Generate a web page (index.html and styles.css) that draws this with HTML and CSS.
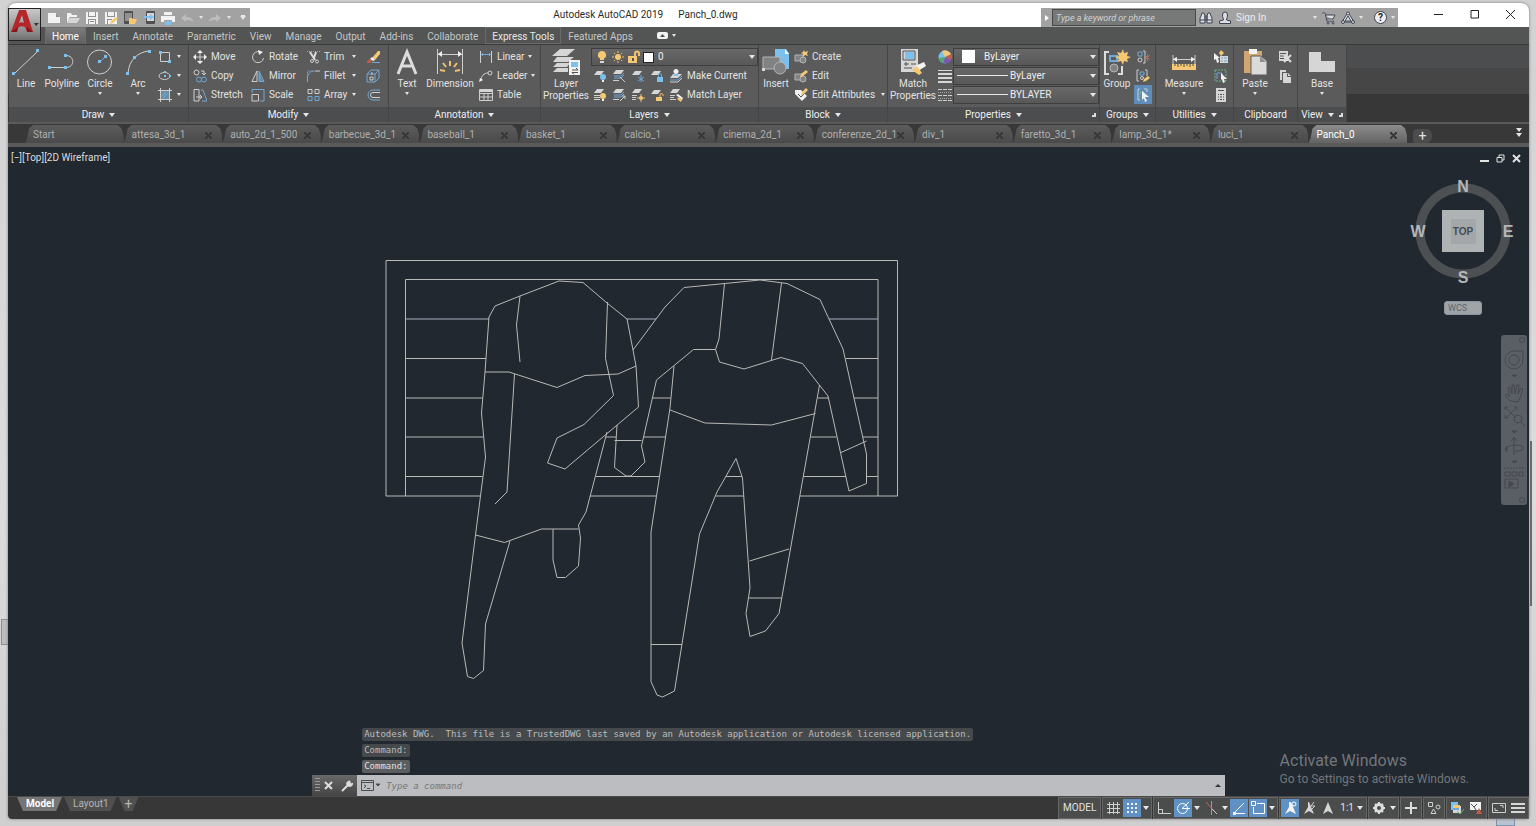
FILE: index.html
```html
<!DOCTYPE html>
<html lang="en">
<head>
  <meta charset="UTF-8" />
  <meta name="viewport" content="width=device-width, initial-scale=1.0"/>
  <title>Autodesk AutoCAD 2019 - Panch_0.dwg</title>
  <link rel="stylesheet" href="styles.css">
</head>
<body>

  <!-- Icon set -->
  <svg class="sprite" width="0" height="0" aria-hidden="true">
    <!-- small icons, 14x14 -->
    <symbol id="i-new" viewBox="0 0 14 14"><path class="fw" d="M1 2h8l4 4v6H1z"/><path class="fg" d="M9 2v4h4z"/></symbol>
    <symbol id="i-open" viewBox="0 0 14 14"><path class="fw" d="M1 2h4l1 2h5v2H4l-3 6z"/><path class="fl" d="M4 7h10l-3 5H1z"/></symbol>
    <symbol id="i-save" viewBox="0 0 14 14"><path class="fw" d="M1 1h12v12H1z"/><path class="fg" d="M3 1h1v4h6V1h1v5H3zM3 8h8v5h-1V9H4v4H3z"/><path class="fg" d="M5 10h4v1H5z"/></symbol>
    <symbol id="i-saveas" viewBox="0 0 14 14"><path class="fw" d="M1 1h12v12H1z"/><path class="fg" d="M3 1h1v4h6V1h1v5H3zM3 8h5v1H4v4H3z"/><path class="fy" d="M6 13l1-3 5-4 2 2-5 4z"/></symbol>
    <symbol id="i-webopen" viewBox="0 0 14 14"><rect class="fd" x="1" y="0" width="9" height="13" rx="1"/><path class="fg" d="M2 2h7v8H2z"/><path class="fy" d="M6 7h3l1 1h4l-2 5H6z"/></symbol>
    <symbol id="i-websave" viewBox="0 0 14 14"><rect class="fd" x="4" y="0" width="9" height="13" rx="1"/><path class="fl" d="M5 2h7v8H5z"/><path class="fb" d="M2 5h6V3l4 3-4 3V7H2z"/></symbol>
    <symbol id="i-print" viewBox="0 0 14 14"><path class="fw" d="M3 1h8v3H3zM0 5h14v6h-3V9H3v2H0z"/><path class="fb" d="M4 10h6v4H4z"/></symbol>
    <symbol id="i-undo" viewBox="0 0 14 14"><path class="fdis" d="M1 7l5-4v3c4 0 7 1 7 5-2-2-4-2-7-2v2z"/></symbol>
    <symbol id="i-redo" viewBox="0 0 14 14"><path class="fdis" d="M13 7L8 3v3c-4 0-7 1-7 5 2-2 4-2 7-2v2z"/></symbol>
    <symbol id="i-rect" viewBox="0 0 14 14"><path class="s" d="M2.500 3v8.500h9v-9H4"/><path class="fb" d="M1 1h3v3H1zM10 10h3v3h-3z"/></symbol>
    <symbol id="i-ellipse" viewBox="0 0 14 14"><ellipse class="s" cx="6.500" cy="7" rx="5.500" ry="3.500"/><path class="fb" d="M6 6h2v2H6zM6 2h2v2H6zM11 6h2v2h-2z"/></symbol>
    <symbol id="i-hatch" viewBox="0 0 14 14"><path class="fb dim" d="M3 3h8v8H3z"/><path class="s" d="M2.500 0v14M11.500 0v14M0 2.500h14M0 11.500h14"/><path class="b" d="M4 8l4-4M5 10l5-5"/></symbol>
    <symbol id="i-move" viewBox="0 0 14 14"><path class="s" d="M7 2v10M2 7h10"/><path class="fw" d="M7 0l3 3H4zM7 14l3-3H4zM0 7l3-3v6zM14 7l-3-3v6z"/></symbol>
    <symbol id="i-rotate" viewBox="0 0 14 14"><path class="s" d="M9 2A5.500 5.500 0 1 0 12.500 8"/><path class="fw" d="M7 0l5 2-4 3z"/></symbol>
    <symbol id="i-trim" viewBox="0 0 14 14"><path class="dots" d="M1 1.500h13"/><path class="s2" d="M4 2l5 8M10 2L8 8"/><circle class="s" cx="6" cy="11" r="1.500"/><circle class="s" cx="11" cy="11.500" r="1.500"/></symbol>
    <symbol id="i-erase" viewBox="0 0 14 14"><path class="fy" d="M6 8l6-7h2v3l-5 6z"/><path class="fw" d="M4 9l2-2 3 3-2 1z"/><path class="fr" d="M1 11l3-2 2 2-1 2H1z"/><path class="b" d="M6 12.500h8"/></symbol>
    <symbol id="i-copy" viewBox="0 0 14 14"><circle class="s" cx="3.500" cy="3.500" r="2.500"/><path class="s" d="M8 2h3v4M9 4l2 2 2-2"/><circle class="b" cx="6" cy="10.500" r="2.500"/><circle class="b" cx="11" cy="10.500" r="2.500"/></symbol>
    <symbol id="i-mirror" viewBox="0 0 14 14"><path class="s" d="M6 2v10.500H1z"/><path class="b" d="M8 2v10.500h5z"/><path class="fb dim" d="M8 3v9h4z"/></symbol>
    <symbol id="i-fillet" viewBox="0 0 14 14"><path class="b" d="M1.500 13V9c0-4 3-7 7-7"/><path class="s" d="M9 2h5"/><path class="dots" d="M1.500 8V2H7"/></symbol>
    <symbol id="i-box" viewBox="0 0 14 14"><path class="b" d="M1 5h8v8H1zM1 5l4-4h8v8l-4 4M9 5l4-4"/><path class="s" d="M4 8h3v3H4zM6 3v3"/></symbol>
    <symbol id="i-stretch" viewBox="0 0 14 14"><path class="s" d="M1 1.500h5V13H1zM3 9h6M7 7l2 2-2 2"/><path class="b" d="M8 2h2l4 11H9"/></symbol>
    <symbol id="i-scale" viewBox="0 0 14 14"><path class="b" d="M1 5V1.500h12V13H9"/><path class="s" d="M1 6.500h6.500V13H1z"/></symbol>
    <symbol id="i-array" viewBox="0 0 14 14"><path class="s" d="M2 1.500h4v4H2zM9 1.500h4v4H9z"/><path class="b" d="M2 8.500h4v4H2zM9 8.500h4v4H9z"/></symbol>
    <symbol id="i-offset" viewBox="0 0 14 14"><path class="b" d="M14 2H7a5 5 0 0 0 0 10h7"/><path class="s" d="M14 4.500H7a2.500 2.500 0 0 0 0 5h7"/></symbol>
    <symbol id="i-linear" viewBox="0 0 14 14"><path class="s" d="M1.500 1v12M12.500 1v12"/><path class="b" d="M2 4.500h10M4 3L2.500 4.500 4 6M10 3l1.500 1.500L10 6"/></symbol>
    <symbol id="i-leader" viewBox="0 0 14 14"><path class="s" d="M2 12C2 7 5 4 9 4"/><circle class="s" cx="11" cy="4" r="2"/><path class="fw" d="M0 13l1-4 3 2z"/></symbol>
    <symbol id="i-table" viewBox="0 0 14 14"><path class="s" d="M.5 1.500h13v11H.5zM1 5.500h12M1 9h12M5 5v7M9 5v7"/><path class="fl" d="M1 2h12v2H1z"/></symbol>
    <symbol id="i-bulb" viewBox="0 0 14 14"><path class="fy" d="M7 1a4 4 0 0 0-2 7.500V10h4V8.500A4 4 0 0 0 7 1z"/><path class="fl" d="M5 11h4v2H5z"/></symbol>
    <symbol id="i-sun" viewBox="0 0 14 14"><circle class="fy" cx="7" cy="7" r="3"/><path class="y" d="M7 1v2M7 11v2M1 7h2M11 7h2M3 3l1 1M10 10l1 1M11 3l-1 1M4 10l-1 1"/></symbol>
    <symbol id="i-unlock" viewBox="0 0 14 14"><path class="fy" d="M1 6h9v7H1z"/><path class="y2" d="M8 6V3.500a2 2 0 0 1 4 0V6"/><path class="fd" d="M5 8h2v3H5z"/></symbol>
    <symbol id="i-l-off" viewBox="0 0 14 14"><path class="fl" d="M4 2h7L8 6H1z"/><circle class="fb" cx="10" cy="8" r="3"/><path class="fw" d="M9 11h2v2H9z"/></symbol>
    <symbol id="i-l-iso" viewBox="0 0 14 14"><path class="fl" d="M4 1h8L9 5H1z"/><path class="b" d="M2 7h7l3-3M2 9h7l3-3"/><path class="s" d="M1 11.500h6M8 8l5 5"/></symbol>
    <symbol id="i-l-freeze" viewBox="0 0 14 14"><path class="fl" d="M4 2h7L8 6H1z"/><path class="b" d="M10 6v7M7 8l6 4M13 8l-6 4"/></symbol>
    <symbol id="i-l-lock" viewBox="0 0 14 14"><path class="fl" d="M4 2h7L8 6H1z"/><path class="fb" d="M7 8h6v5H7z"/><path class="b" d="M8.500 8V6a1.500 1.500 0 0 1 3 0v2"/></symbol>
    <symbol id="i-l-cur" viewBox="0 0 14 14"><path class="fl" d="M4 5h9l-4 4H1z"/><circle class="fw" cx="7" cy="2.500" r="2.500"/><path class="fb" d="M5 5h4v2H5z"/><path class="b" d="M1 11h8l4-4"/><path class="s" d="M1 13h8l4-4"/></symbol>
    <symbol id="i-l-on" viewBox="0 0 14 14"><path class="fl" d="M4 1h7L8 5H1z"/><path class="s" d="M1 7.500h6M1 9.500h6M1 11.500h6"/><circle class="fy" cx="10" cy="8" r="3"/><path class="fw" d="M9 11h2v2H9z"/></symbol>
    <symbol id="i-l-uniso" viewBox="0 0 14 14"><path class="fl" d="M4 1h8L9 5H1z"/><path class="b" d="M2 7h7l3-3M2 9h7l3-3"/><path class="s" d="M1 11.500h6M8 13l5-5M10 8h3v3"/></symbol>
    <symbol id="i-l-thaw" viewBox="0 0 14 14"><path class="fl" d="M4 1h7L8 5H1z"/><path class="s" d="M1 7.500h5M1 9.500h4M1 11.500h4"/><circle class="fy" cx="10" cy="10" r="2"/><path class="y" d="M10 6v8M6 10h8"/></symbol>
    <symbol id="i-l-unlock" viewBox="0 0 14 14"><path class="fl" d="M4 2h7L8 6H1z"/><path class="fy" d="M6 9h6v4H6z"/><path class="y" d="M10 9V7a1.500 1.500 0 0 1 3 0v1"/></symbol>
    <symbol id="i-l-match" viewBox="0 0 14 14"><path class="fl" d="M4 1h7L8 5H1z"/><path class="s" d="M1 7.500h5M1 9.500h4M1 11.500h6"/><path class="fw" d="M7 7l2-1 5 4-1 2z"/><path class="fy" d="M8 11l2-2 3 3-1 2z"/></symbol>
    <symbol id="i-b-create" viewBox="0 0 14 14"><path class="sf" d="M1 5h8v6H1z"/><circle class="sf" cx="9" cy="10" r="3"/><path class="fy" d="M10 0l1 2 3-1-1 3 1 2-3-1-2 2V4L7 3l2-1z"/></symbol>
    <symbol id="i-b-edit" viewBox="0 0 14 14"><path class="sf" d="M1 5h8v6H1z"/><circle class="sf" cx="9" cy="10" r="3"/><path class="fy" d="M6 8l1-3 5-4 2 2-5 4z"/></symbol>
    <symbol id="i-b-attr" viewBox="0 0 14 14"><path class="fw" d="M1 2h6l6 6-5 5-7-7z"/><path class="dk" d="M4 6l3 3 4-4"/><path class="fy" d="M7 8l1-4 4-4 2 2-4 4z"/></symbol>
    <symbol id="i-wheel" viewBox="0 0 14 14"><circle class="fb" cx="7" cy="7" r="6.500"/><path class="fr" d="M7 7l6-3a7 7 0 0 1 0 6z"/><path class="fy" d="M7 7L4 1a7 7 0 0 1 9 3z"/><path fill="#7b55b8" d="M7 7l6 3a7 7 0 0 1-8 3z"/><path fill="#58a56b" d="M7 7l-2 6a7 7 0 0 1-4-5z"/></symbol>
    <symbol id="i-lweight" viewBox="0 0 14 14"><path class="fl" d="M0 1h14v1H0zM0 4h14v2H0zM0 8h14v2H0zM0 12h14v2H0z"/></symbol>
    <symbol id="i-ltype" viewBox="0 0 14 14"><path class="dots" d="M0 4.500h14M0 10.500h14"/><path class="s" d="M0 1.500h14M0 7.500h14M0 12.500h14" stroke-dasharray="4 1"/></symbol>
    <symbol id="i-ungroup" viewBox="0 0 14 14"><path class="b" d="M2 2h4v4H2z"/><circle class="s" cx="4" cy="10" r="2"/><path class="s" d="M7 1h2v12H7"/><path class="r" d="M9 5l5 5M14 5L9 10M11.500 4v7"/></symbol>
    <symbol id="i-gedit" viewBox="0 0 14 14"><path class="s" d="M3 1H1v11h2M9 1h2v6"/><path class="b" d="M4 3h4v3H4z"/><circle class="s" cx="6" cy="9" r="1.500"/><path class="fy" d="M7 13l1-3 4-3 2 2-4 3z"/></symbol>
    <symbol id="i-gsel" viewBox="0 0 14 14"><path class="s" d="M4 1H2v11h2M8 1h3v3"/><path class="g" d="M4 10V4h4" stroke-dasharray="2 1"/><path class="fw" d="M6 3l7 6H9l2 4-2 1-1-4-2 2z"/></symbol>
    <symbol id="i-qsel" viewBox="0 0 14 14"><path class="fl" d="M6 6h8v7H6z"/><path class="b" d="M7 8h2M7 11h2M10 8h3M10 11h3"/><path class="fw" d="M0 3l6 5H4l1 4-2 1-1-4-2 1z"/><path class="fy" d="M7 0l3 3-3 3-2-3z"/></symbol>
    <symbol id="i-selall" viewBox="0 0 14 14"><path class="g" d="M1 1h11v11H1z" stroke-dasharray="2 1"/><path class="b" d="M3 10V4h5v5"/><path class="fw" d="M7 4l6 6h-3l1 3-2 1-1-4-1 1z"/></symbol>
    <symbol id="i-calc" viewBox="0 0 14 14"><path class="fl" d="M2 0h10v14H2z"/><path class="dk" d="M4 2.500h6M4 6.500h6M4 9h6M4 11.500h6"/><path class="ld" d="M5.500 5v8M8.500 5v8"/></symbol>
    <symbol id="i-cut" viewBox="0 0 14 14"><path class="fl" d="M1 1h9v10H1z"/><path class="dk" d="M2 3.500h6M2 6h5M2 8.500h4"/><path class="s2" d="M6 5l7 7M13 5l-7 7"/></symbol>
    <symbol id="i-cpy" viewBox="0 0 14 14"><path class="fl" d="M2 1h6v2H4v8H2z"/><path class="fl" d="M5 4h5l3 3v7H5z"/><path class="dk" d="M9.500 4.500v3H13"/></symbol>
    <symbol id="i-bino" viewBox="0 0 14 14"><path class="ink" d="M2 5l1-3h2l1 3v7H1V7zM12 5l-1-3H9L8 5v7h5V7zM6 5h2v4H6zM1 9h5M8 9h5"/></symbol>
    <symbol id="i-user" viewBox="0 0 14 14"><path class="ink" d="M4.500 4a2.500 3 0 0 1 5 0c0 3-1 3-1 5l4 1v2.500h-11V10l4-1c0-2-1-2-1-5z"/></symbol>
    <symbol id="i-cart" viewBox="0 0 14 14"><path class="ink" d="M0 2h3l2 8h7M3.500 4H13l-2 4H5"/><circle class="ink" cx="6" cy="12" r="1"/><circle class="ink" cx="11" cy="12" r="1"/></symbol>
    <symbol id="i-a360" viewBox="0 0 14 14"><path class="ink" d="M7 1L1 11h12zM7 5l-3 5h6z"/><circle class="ink" cx="2" cy="11" r="1.500"/><circle class="ink" cx="12" cy="11" r="1.500"/><circle class="ink" cx="7" cy="2.500" r="1.500"/></symbol>

    <!-- status bar -->
    <symbol id="s-grid" viewBox="0 0 14 14"><path class="s" d="M3.500 1v12M7.500 1v12M11.500 1v12M1 3.500h13M1 7.500h13M1 11.500h13"/></symbol>
    <symbol id="s-snap" viewBox="0 0 14 14"><path class="fw" d="M2 2h2v2H2zM6 2h2v2H6zM10 2h2v2h-2zM2 6h2v2H2zM6 6h2v2H6zM10 6h2v2h-2zM2 10h2v2H2zM6 10h2v2H6zM10 10h2v2h-2z"/></symbol>
    <symbol id="s-ortho" viewBox="0 0 14 14"><path class="s" d="M1.500 1v11.500H14M1.500 8.500H5.500v4"/></symbol>
    <symbol id="s-polar" viewBox="0 0 14 14"><circle class="sw" cx="6.500" cy="7.500" r="5"/><path class="sw" d="M6 7.500h8M6 7.500L13 1"/></symbol>
    <symbol id="s-iso" viewBox="0 0 14 14"><path class="g" d="M7.500 0v14"/><path class="r" d="M2 1l10 11"/><path class="s" d="M8 8l5 5"/></symbol>
    <symbol id="s-track" viewBox="0 0 14 14"><path class="sw" d="M12 2L2 12M3 12.500h10" /><path class="fw" d="M1 11h3v3H1z"/></symbol>
    <symbol id="s-osnap" viewBox="0 0 14 14"><path class="sw" d="M6 2.500h7.500v10h-11V6M.5.5h4v4h-4z"/></symbol>
    <symbol id="s-ann" viewBox="0 0 14 14"><path class="fw" d="M6 1h2l5 12-6-3-5 3 4-7z"/><circle class="sw" cx="11" cy="3" r="2"/></symbol>
    <symbol id="s-auto" viewBox="0 0 14 14"><path class="fl" d="M6 1h1l5 12-5-3-5 3 4-7z"/><path class="s" d="M12 1L9 5h4L10 8"/></symbol>
    <symbol id="s-scale" viewBox="0 0 14 14"><path class="fl" d="M7 1l5 12-5-3-5 3z"/></symbol>
    <symbol id="s-gear" viewBox="0 0 14 14"><circle class="gear" cx="7" cy="7" r="3.500"/><path class="s2" d="M7 1v2M7 11v2M1 7h2M11 7h2M3 3l1 1M10 10l1 1M11 3l-1 1M4 10l-1 1"/></symbol>
    <symbol id="s-plus" viewBox="0 0 14 14"><path class="s2" d="M7 1v12M1 7h12"/></symbol>
    <symbol id="s-iso2" viewBox="0 0 14 14"><path class="s" d="M1.500 1.500h4v4h-4zM4 12.500h5L6.500 8z"/><circle class="s" cx="11" cy="6" r="2"/></symbol>
    <symbol id="s-hw" viewBox="0 0 14 14"><path class="fb" d="M1 1h7v8H1z"/><path class="fl" d="M3 5h8v7H3z"/><path class="fy" d="M3 4h7v3H3z"/><path class="b2" d="M3 8h6"/><path class="g" d="M7 10l3 3 4-5"/></symbol>
    <symbol id="s-clean" viewBox="0 0 14 14"><path class="fw" d="M1 1h11v8H1z"/><path class="dk" d="M2 3l3 3 3-3M5 6l4 6"/><path class="fr" d="M10 7l3 6H7z"/></symbol>
    <symbol id="s-full" viewBox="0 0 14 14"><path class="s" d="M.5 2.500h13v9H.5zM3 7v2.500h3M8 4.500h3V7"/></symbol>
    <symbol id="s-menu" viewBox="0 0 14 14"><path class="fl" d="M0 2h14v2H0zM0 6h14v2H0zM0 10h14v2H0z"/></symbol>

    <!-- large icons, 30x28 -->
    <symbol id="b-line" viewBox="0 0 30 28"><path class="s" d="M3 26L27 3"/><path class="fb" d="M1 24h3v3H1zM25 1h3v3h-3z"/></symbol>
    <symbol id="b-poly" viewBox="0 0 30 28"><path class="s" d="M3 19.500h16c9 0 9-12 0-12"/><path class="fb" d="M1 18h3v3H1zM17 18h3v3h-3zM17 6h3v3h-3z"/></symbol>
    <symbol id="b-circle" viewBox="0 0 30 28"><circle class="s" cx="14.500" cy="14" r="12"/><path class="b" d="M15 14l5-5"/><path class="fb" d="M13 12h3v3h-3zM19 7h3v3h-3z"/></symbol>
    <symbol id="b-arc" viewBox="0 0 30 28"><path class="s" d="M5 25C6 12 15 4 26 3"/><path class="fb" d="M3 24h3v3H3zM10 8h3v3h-3zM25 2h3v3h-3z"/></symbol>
    <symbol id="b-text" viewBox="0 0 30 28"><path class="a" d="M6 26L15 4l9 22M9 18h12"/></symbol>
    <symbol id="b-dim" viewBox="0 0 30 28"><path class="s" d="M2.500 1v25M27.500 1v25M3 6.500h24"/><path class="fw" d="M3 6l4-3v6zM27 6l-4-3v6z"/><path class="y2" d="M15 13v5M8 15l3 4M22 15l-3 4M5 22l5 1M25 22l-5 1"/></symbol>
    <symbol id="b-layer" viewBox="0 0 30 28"><path class="fl" d="M9 1h15l-8 7H1zM6 9h17l-6 5H2zM6 15h13l-3 4H2zM6 20h11v4H2z"/><path class="fw" d="M18 12h11v15H18z"/><path class="fb" d="M20 14h7v5h-7z"/><path class="dk" d="M21 22h6l-2-2M27 24.500h-6l2 2"/></symbol>
    <symbol id="b-insert" viewBox="0 0 30 28"><path class="fb" d="M14 1h11l3 4v16H14z"/><path class="fw" d="M24 1v5h4z"/><path class="sf" d="M2 9h17v12H2z"/><circle class="sf" cx="19" cy="20" r="6"/><path class="fl" d="M1 20h3v3H1z"/></symbol>
    <symbol id="b-match" viewBox="0 0 30 28"><path class="fl" d="M3 1h17v23H3z"/><path class="dk" d="M5 3h12v9H5zM6 16h5M13 16h5M8 14v4M6 20h8"/><path class="fb" d="M7 4h9v7H7z"/><path class="fw" d="M17 18l9-4 2 4-8 5z"/><path class="fy" d="M14 22l5-4 5 7-3 2z"/></symbol>
    <symbol id="b-group" viewBox="0 0 30 28"><path class="s2" d="M7 4H3v22h4M16 26h4v-8"/><path class="b2" d="M8 14V8h7v5H9"/><circle class="sf" cx="12" cy="20" r="4"/><path class="fy" d="M21 1l1 4 4-1-1 4 4 1-4 2 1 3-4-1-1 4-2-4-4 1 2-3-4-2 4-1-2-4 4 1z"/></symbol>
    <symbol id="b-measure" viewBox="0 0 30 28"><path class="s" d="M4 7v9M26 7v9M4 11.500h22"/><path class="fw" d="M4 11l4-2v5zM26 11l-4-2v5z"/><path class="fy" d="M3 16h24v6H3z"/><path class="dk" d="M6 16v2M9 16v3M12 16v2M15 16v3M18 16v2M21 16v3M24 16v2"/></symbol>
    <symbol id="b-paste" viewBox="0 0 30 28"><path fill="#d2a672" d="M4 3h18v22H4z"/><path class="fw" d="M9 1h8v5H9z"/><path class="sp" d="M11 8h10l6 5v14H11z"/><path class="fg" d="M20 8v6h6z"/></symbol>
    <symbol id="b-base" viewBox="0 0 30 28"><path class="fl" d="M2 4h12v9h14v11H2z"/></symbol>
  </svg>

  <!-- Things behind the main window -->
  <div class="behind behind-left"></div>
  <div class="behind behind-right"></div>
  <div class="behind behind-bottom"></div>

  <div class="window">

    <!-- Title bar -->
    <header class="titlebar">
      <button class="app-button" aria-label="Application menu">
        <svg width="31" height="31" viewBox="0 0 31 31"><path fill="#b3262a" d="M2 23L10 1h7l7 22h-6l-2-5c-3-1-5-1-7 1l-1 4zM10 14c2-1 3-1 5 0L13 6z"/><path fill="#83181c" d="M2 23l7-5-1 5zM18 23l0-5 6 5z"/><path fill="#333" d="M25 14h5l-3 3z"/></svg>
      </button>
      <div class="quick">
        <button aria-label="New"><svg class="ico"><use href="#i-new"/></svg></button>
        <button aria-label="Open"><svg class="ico"><use href="#i-open"/></svg></button>
        <button aria-label="Save"><svg class="ico"><use href="#i-save"/></svg></button>
        <button aria-label="Save As"><svg class="ico"><use href="#i-saveas"/></svg></button>
        <button aria-label="Open from Web"><svg class="ico"><use href="#i-webopen"/></svg></button>
        <button aria-label="Save to Web"><svg class="ico"><use href="#i-websave"/></svg></button>
        <button aria-label="Plot"><svg class="ico"><use href="#i-print"/></svg></button>
        <button aria-label="Undo"><svg class="ico"><use href="#i-undo"/></svg></button>
        <i class="arrow"></i>
        <button aria-label="Redo"><svg class="ico"><use href="#i-redo"/></svg></button>
        <i class="arrow"></i>
        <i class="arrow wide bar"></i>
      </div>
      <div class="title"><span>Autodesk AutoCAD 2019</span><span>Panch_0.dwg</span></div>
      <div class="info">
        <button class="info-toggle" aria-label="Collapse search"><i class="arrow right"></i></button>
        <input class="search" type="text" placeholder="Type a keyword or phrase" aria-label="Search help">
        <button aria-label="Find"><svg class="ico"><use href="#i-bino"/></svg></button>
        <button class="signin"><svg class="ico"><use href="#i-user"/></svg>Sign In<i class="arrow"></i></button>
        <button aria-label="App Store"><svg class="ico"><use href="#i-cart"/></svg></button>
        <button aria-label="Autodesk account"><svg class="ico"><use href="#i-a360"/></svg><i class="arrow"></i></button>
        <button class="help" aria-label="Help"><span>?</span><i class="arrow"></i></button>
      </div>
      <div class="window-buttons">
        <button aria-label="Minimize"><svg width="11" height="11"><path d="M1 5.500h9"/></svg></button>
        <button aria-label="Maximize"><svg width="11" height="11"><path d="M2 1.500h7.500v7.500H2z"/></svg></button>
        <button aria-label="Close"><svg width="11" height="11"><path d="M1 1l9 9M10 1l-9 9"/></svg></button>
      </div>
    </header>

    <!-- Ribbon tabs -->
    <nav class="menu">
      <a class="active" href="#">Home</a>
      <a href="#">Insert</a>
      <a href="#">Annotate</a>
      <a href="#">Parametric</a>
      <a href="#">View</a>
      <a href="#">Manage</a>
      <a href="#">Output</a>
      <a href="#">Add-ins</a>
      <a href="#">Collaborate</a>
      <a class="boxed" href="#">Express Tools</a>
      <a href="#">Featured Apps</a>
      <button class="ribbon-toggle" aria-label="Minimize ribbon"><svg width="11" height="7"><rect class="fw" width="11" height="7" rx="2"/><path class="fd" d="M3 5l2.500-3L8 5z"/></svg><i class="arrow"></i></button>
    </nav>

    <!-- Ribbon -->
    <section class="ribbon">
      <div class="panel p-draw">
        <div class="panel-body">
          <button class="big"><svg class="pic"><use href="#b-line"/></svg>Line</button>
          <button class="big"><svg class="pic"><use href="#b-poly"/></svg>Polyline</button>
          <button class="big"><svg class="pic"><use href="#b-circle"/></svg>Circle<i class="arrow"></i></button>
          <button class="big"><svg class="pic"><use href="#b-arc"/></svg>Arc<i class="arrow"></i></button>
          <div class="stack">
            <button class="tool" aria-label="Rectangle"><svg class="ico"><use href="#i-rect"/></svg><i class="arrow"></i></button>
            <button class="tool" aria-label="Ellipse"><svg class="ico"><use href="#i-ellipse"/></svg><i class="arrow"></i></button>
            <button class="tool" aria-label="Hatch"><svg class="ico"><use href="#i-hatch"/></svg><i class="arrow"></i></button>
          </div>
        </div>
        <div class="panel-title">Draw<i class="arrow wide"></i></div>
      </div>

      <div class="panel p-modify">
        <div class="panel-body">
          <button class="tool"><svg class="ico"><use href="#i-move"/></svg>Move</button>
          <button class="tool"><svg class="ico"><use href="#i-rotate"/></svg>Rotate</button>
          <button class="tool"><svg class="ico"><use href="#i-trim"/></svg>Trim<i class="arrow"></i></button>
          <button class="tool" aria-label="Erase"><svg class="ico"><use href="#i-erase"/></svg></button>
          <button class="tool"><svg class="ico"><use href="#i-copy"/></svg>Copy</button>
          <button class="tool"><svg class="ico"><use href="#i-mirror"/></svg>Mirror</button>
          <button class="tool"><svg class="ico"><use href="#i-fillet"/></svg>Fillet<i class="arrow"></i></button>
          <button class="tool" aria-label="Explode"><svg class="ico"><use href="#i-box"/></svg></button>
          <button class="tool"><svg class="ico"><use href="#i-stretch"/></svg>Stretch</button>
          <button class="tool"><svg class="ico"><use href="#i-scale"/></svg>Scale</button>
          <button class="tool"><svg class="ico"><use href="#i-array"/></svg>Array<i class="arrow"></i></button>
          <button class="tool" aria-label="Offset"><svg class="ico"><use href="#i-offset"/></svg></button>
        </div>
        <div class="panel-title">Modify<i class="arrow wide"></i></div>
      </div>

      <div class="panel p-annotation">
        <div class="panel-body">
          <button class="big"><svg class="pic"><use href="#b-text"/></svg>Text<i class="arrow"></i></button>
          <button class="big"><svg class="pic"><use href="#b-dim"/></svg>Dimension</button>
          <div class="stack">
            <button class="tool"><svg class="ico"><use href="#i-linear"/></svg>Linear<i class="arrow"></i></button>
            <button class="tool"><svg class="ico"><use href="#i-leader"/></svg>Leader<i class="arrow"></i></button>
            <button class="tool"><svg class="ico"><use href="#i-table"/></svg>Table</button>
          </div>
        </div>
        <div class="panel-title">Annotation<i class="arrow wide"></i></div>
      </div>

      <div class="panel p-layers">
        <div class="panel-body">
          <button class="big"><svg class="pic"><use href="#b-layer"/></svg>Layer<br>Properties</button>
          <div class="stack">
            <div class="combo">
              <svg class="ico"><use href="#i-bulb"/></svg><svg class="ico"><use href="#i-sun"/></svg><svg class="ico"><use href="#i-unlock"/></svg><i class="swatch"></i>
              <select aria-label="Layer"><option>0</option></select><i class="arrow wide"></i>
            </div>
            <div class="tool-row">
              <button class="tool" aria-label="Off"><svg class="ico"><use href="#i-l-off"/></svg></button>
              <button class="tool" aria-label="Isolate"><svg class="ico"><use href="#i-l-iso"/></svg></button>
              <button class="tool" aria-label="Freeze"><svg class="ico"><use href="#i-l-freeze"/></svg></button>
              <button class="tool" aria-label="Lock"><svg class="ico"><use href="#i-l-lock"/></svg></button>
              <button class="tool"><svg class="ico"><use href="#i-l-cur"/></svg>Make Current</button>
            </div>
            <div class="tool-row">
              <button class="tool" aria-label="Turn all on"><svg class="ico"><use href="#i-l-on"/></svg></button>
              <button class="tool" aria-label="Unisolate"><svg class="ico"><use href="#i-l-uniso"/></svg></button>
              <button class="tool" aria-label="Thaw all"><svg class="ico"><use href="#i-l-thaw"/></svg></button>
              <button class="tool" aria-label="Unlock"><svg class="ico"><use href="#i-l-unlock"/></svg></button>
              <button class="tool"><svg class="ico"><use href="#i-l-match"/></svg>Match Layer</button>
            </div>
          </div>
        </div>
        <div class="panel-title">Layers<i class="arrow wide"></i></div>
      </div>

      <div class="panel p-block">
        <div class="panel-body">
          <button class="big"><svg class="pic"><use href="#b-insert"/></svg>Insert</button>
          <div class="stack">
            <button class="tool"><svg class="ico"><use href="#i-b-create"/></svg>Create</button>
            <button class="tool"><svg class="ico"><use href="#i-b-edit"/></svg>Edit</button>
            <button class="tool"><svg class="ico"><use href="#i-b-attr"/></svg>Edit Attributes<i class="arrow"></i></button>
          </div>
        </div>
        <div class="panel-title">Block<i class="arrow wide"></i></div>
      </div>

      <div class="panel p-properties">
        <div class="panel-body">
          <button class="big"><svg class="pic"><use href="#b-match"/></svg>Match<br>Properties</button>
          <div class="stack">
            <div class="prop-row">
              <svg class="ico"><use href="#i-wheel"/></svg>
              <div class="combo"><i class="swatch big-swatch"></i><select aria-label="Object color"><option>ByLayer</option></select><i class="arrow wide"></i></div>
            </div>
            <div class="prop-row">
              <svg class="ico"><use href="#i-lweight"/></svg>
              <div class="combo"><i class="line-sample"></i><select aria-label="Lineweight"><option>ByLayer</option></select><i class="arrow wide"></i></div>
            </div>
            <div class="prop-row">
              <svg class="ico"><use href="#i-ltype"/></svg>
              <div class="combo"><i class="line-sample"></i><select aria-label="Linetype"><option>BYLAYER</option></select><i class="arrow wide"></i></div>
            </div>
          </div>
        </div>
        <div class="panel-title">Properties<i class="arrow wide"></i><i class="launcher"></i></div>
      </div>

      <div class="panel p-groups">
        <div class="panel-body">
          <button class="big"><svg class="pic"><use href="#b-group"/></svg>Group</button>
          <div class="stack">
            <button class="tool" aria-label="Ungroup"><svg class="ico"><use href="#i-ungroup"/></svg></button>
            <button class="tool" aria-label="Group edit"><svg class="ico"><use href="#i-gedit"/></svg></button>
            <button class="tool on" aria-label="Group selection"><svg class="ico"><use href="#i-gsel"/></svg></button>
          </div>
        </div>
        <div class="panel-title">Groups<i class="arrow wide"></i></div>
      </div>

      <div class="panel p-utilities">
        <div class="panel-body">
          <button class="big"><svg class="pic"><use href="#b-measure"/></svg>Measure<i class="arrow"></i></button>
          <div class="stack">
            <button class="tool" aria-label="Quick select"><svg class="ico"><use href="#i-qsel"/></svg></button>
            <button class="tool" aria-label="Select all"><svg class="ico"><use href="#i-selall"/></svg></button>
            <button class="tool" aria-label="Calculator"><svg class="ico"><use href="#i-calc"/></svg></button>
          </div>
        </div>
        <div class="panel-title">Utilities<i class="arrow wide"></i></div>
      </div>

      <div class="panel p-clipboard">
        <div class="panel-body">
          <button class="big"><svg class="pic"><use href="#b-paste"/></svg>Paste<i class="arrow"></i></button>
          <div class="stack">
            <button class="tool" aria-label="Cut"><svg class="ico"><use href="#i-cut"/></svg></button>
            <button class="tool" aria-label="Copy clip"><svg class="ico"><use href="#i-cpy"/></svg></button>
          </div>
        </div>
        <div class="panel-title">Clipboard</div>
      </div>

      <div class="panel p-view">
        <div class="panel-body">
          <button class="big"><svg class="pic"><use href="#b-base"/></svg>Base<i class="arrow"></i></button>
        </div>
        <div class="panel-title">View<i class="arrow wide"></i><i class="launcher"></i></div>
      </div>
    </section>

    <!-- Open drawings -->
    <div class="files">
      <div class="file-tabs">
        <a class="file" href="#">Start</a>
        <a class="file" href="#">attesa_3d_1<i class="x"></i></a>
        <a class="file" href="#">auto_2d_1_500<i class="x"></i></a>
        <a class="file" href="#">barbecue_3d_1<i class="x"></i></a>
        <a class="file" href="#">baseball_1<i class="x"></i></a>
        <a class="file" href="#">basket_1<i class="x"></i></a>
        <a class="file" href="#">calcio_1<i class="x"></i></a>
        <a class="file" href="#">cinema_2d_1<i class="x"></i></a>
        <a class="file" href="#">conferenze_2d_1<i class="x"></i></a>
        <a class="file" href="#">div_1<i class="x"></i></a>
        <a class="file" href="#">faretto_3d_1<i class="x"></i></a>
        <a class="file" href="#">lamp_3d_1*<i class="x"></i></a>
        <a class="file" href="#">luci_1<i class="x"></i></a>
        <a class="file current" href="#">Panch_0<i class="x"></i></a>
      </div>
      <button class="add-file" aria-label="New drawing">+</button>
      <button class="more-files" aria-label="More drawings"><i class="arrow wide"></i><i class="arrow wide"></i></button>
    </div>

    <!-- Drawing area -->
    <main class="canvas">
      <svg class="drawing" viewBox="8 147 1521 649" role="img" aria-label="Two people on a bench, top view">
        <!-- bench -->
        <path d="M480 496H386V260.500H897.500V496H800M590 496H656.500M716 496H743.500"/>
        <path d="M405.500 496V279.500H878V496"/>
        <path class="slat" d="M405.500 319H489M627 319H656M829 319H878"/>
        <path d="M405.500 358.500H486M846 358.500H878"/>
        <path d="M405.500 398H482.500M653 398H670.500M818 398H828M854 398H878"/>
        <path d="M405.500 437H483.500M606 437H616M644 437H665M811 437H836.500M863 437H878"/>
        <path d="M405.500 476.500H482.500M596 476.500H659M726 476.500H742M803.500 476.500H846M866.500 476.500H878"/>
        <!-- left person -->
        <path d="M489 317L495 306L520 296L559 281L583 282.500L607 303L627 319L633 350L636 366L638.500 407L565 469L547.500 463L557 438L584 424.500L613.500 395.500L605.500 358.500L607.500 302"/>
        <path d="M520 296L516.500 325L520 362"/>
        <path d="M489 317L485 372L481.500 413L485.500 457L475.500 535L462 643L467.500 676.500L473.500 678.500L483.500 670.500L485.500 624L510 541"/>
        <path d="M485 372H509L557 387.500L585 375.500L618 374L636 366"/>
        <path d="M514.500 374L507 492L495 504"/>
        <path d="M475.500 535L504.500 542.500L541.500 529H578.500"/>
        <path d="M607 432L586 512L578.500 525L580.500 538L578.500 566L565.500 577.500H557L553 560V529"/>
        <!-- right person -->
        <path d="M617 425L614.500 467.500L626 476H631L645 462L641.500 446L656.500 380L693.500 349.500H715.500M614.500 440.500H641.500"/>
        <path d="M633 350L665 307L684 287.500L725 283.500L760 280L787 283.500L820 299.500L829 319L843 349L866.500 454V483.500L849 491L828 396L802.500 363.500L781 357.500L744 369L719.500 362L715.500 349.500L719 339L724.500 283.500"/>
        <path d="M781.500 283L771.500 360M841 452.500L866.500 441"/>
        <path d="M670 410L705 423L771.500 425L815.500 413.500"/>
        <path d="M674 366L670 408L651 532V681.500L657 695L662.500 697L674.500 691L699.500 534L717 492L736 458.500L742.500 478L750 588L746 613.500L750 636.500L765.500 631L779 613.500L819.500 385"/>
        <path d="M651 644.500H682M749.500 561L789 549M749 598H781.500"/>
      </svg>

      <div class="viewport-label">[−][Top][2D Wireframe]</div>
      <div class="doc-buttons">
        <button aria-label="Minimize drawing"><svg width="9" height="9"><path d="M0 7h9"/></svg></button>
        <button aria-label="Restore drawing"><svg width="9" height="9"><path class="thin" d="M1 3.500h5v4.500H1zM3 3V1h5v5H6"/></svg></button>
        <button aria-label="Close drawing"><svg width="9" height="9"><path d="M1 1l7 7M8 1l-7 7"/></svg></button>
      </div>

      <div class="viewcube">
        <svg width="108" height="110" viewBox="0 0 108 110">
          <circle cx="54" cy="54" r="43" fill="none" stroke="#4d5052" stroke-width="9"/>
          <rect x="33" y="33" width="42" height="42" fill="#b0b3b3"/>
          <rect x="42" y="42" width="25" height="25" fill="#a4a7a9"/>
          <text class="face" x="54" y="58">TOP</text>
          <text class="compass" x="54" y="15">N</text>
          <text class="compass" x="54" y="106">S</text>
          <text class="compass" x="9" y="60">W</text>
          <text class="compass" x="99" y="60">E</text>
        </svg>
        <button class="wcs">WCS</button>
      </div>

      <div class="navbar">
        <svg width="26" height="170" viewBox="0 0 26 170">
          <circle cx="21" cy="5" r="2.500"/>
          <path d="M13 16h9v9a9 9 0 1 1-9-9z"/><circle cx="13" cy="25" r="5"/>
          <path class="f" d="M11 40h5l-3 2zM11 96h5l-3 2zM11 126h5l-3 2z"/>
          <path d="M9 66l-5-6 2-1 3 3-2-9 2-1 2 7V50h2l1 9 2-9h2l-1 9 3-6 2 1-3 9-2 4z"/>
          <path d="M4 72l11 11M16 72L5 83M4 75v-3h3M13 72h3v3M4 80v3h3"/><circle cx="17" cy="84" r="4"/><path d="M20 87l4 4"/>
          <path d="M13 103v17M10 106l3-4 3 4M7 114H5c-3-4 20-6 17 0-1 2-5 2-8 2M6 111v6l-2-3z"/>
          <path d="M3 133h20" stroke-dasharray="2 1"/><path d="M4 137h5v4H4zM11 137h5v4h-5zM18 137h4v4h-4zM4 144h13v9H4z"/><path class="f" d="M8 146l5 3-5 3z"/>
          <circle cx="21" cy="165" r="2.500"/>
        </svg>
      </div>

      <div class="activate">
        <h2>Activate Windows</h2>
        <p>Go to Settings to activate Windows.</p>
      </div>

      <!-- Command line -->
      <div class="command">
        <p class="log">Autodesk DWG.&nbsp; This file is a TrustedDWG last saved by an Autodesk application or Autodesk licensed application.</p>
        <p class="log">Command:</p>
        <p class="log last">Command:</p>
        <div class="command-line">
          <div class="command-tools">
            <i class="grip"></i>
            <button aria-label="Close command line"><svg width="9" height="9"><path d="M1 1l7 7M8 1l-7 7"/></svg></button>
            <button aria-label="Customize"><svg width="12" height="12"><path d="M1 11l6-6"/><path class="thin" d="M6 5c-1-3 1-4 3-4v2l2 1 1-1c0 3-3 4-5 3"/></svg></button>
          </div>
          <svg class="prompt" width="20" height="11"><path d="M.5.5h12v10H.5zM1 2.500h11M3 5l2 1-2 2M6 8.500h3"/><path class="f" d="M15 4h4l-2 2z"/></svg>
          <input type="text" placeholder="Type a command" aria-label="Command">
          <i class="arrow up"></i>
        </div>
      </div>
    </main>

    <!-- Layout tabs and status bar -->
    <footer class="bottom">
      <a class="layout current" href="#">Model</a>
      <a class="layout" href="#">Layout1</a>
      <button class="layout add" aria-label="New layout">+</button>
      <div class="status">
        <div class="group"><button class="wide-label">MODEL</button></div>
        <div class="group">
          <button aria-label="Grid"><svg class="ico"><use href="#s-grid"/></svg></button>
          <button class="on" aria-label="Snap"><svg class="ico"><use href="#s-snap"/></svg></button>
          <i class="arrow wide"></i>
        </div>
        <div class="group">
          <button aria-label="Ortho"><svg class="ico"><use href="#s-ortho"/></svg></button>
          <button class="on" aria-label="Polar tracking"><svg class="ico"><use href="#s-polar"/></svg></button>
          <i class="arrow wide"></i>
          <button aria-label="Isometric drafting"><svg class="ico"><use href="#s-iso"/></svg></button>
          <i class="arrow wide"></i>
          <button class="on" aria-label="Object snap tracking"><svg class="ico"><use href="#s-track"/></svg></button>
          <button class="on" aria-label="Object snap"><svg class="ico"><use href="#s-osnap"/></svg></button>
          <i class="arrow wide"></i>
        </div>
        <div class="group">
          <button class="on" aria-label="Annotation visibility"><svg class="ico"><use href="#s-ann"/></svg></button>
          <button aria-label="Auto scale"><svg class="ico"><use href="#s-auto"/></svg></button>
          <button aria-label="Annotation scale"><svg class="ico"><use href="#s-scale"/></svg></button>
          <button class="ratio">1:1<i class="arrow wide"></i></button>
        </div>
        <div class="group">
          <button aria-label="Workspace"><svg class="ico"><use href="#s-gear"/></svg></button>
          <i class="arrow wide"></i>
        </div>
        <div class="group"><button aria-label="Annotation monitor"><svg class="ico"><use href="#s-plus"/></svg></button></div>
        <div class="group"><button aria-label="Isolate objects"><svg class="ico"><use href="#s-iso2"/></svg></button></div>
        <div class="group">
          <button aria-label="Hardware acceleration"><svg class="ico"><use href="#s-hw"/></svg></button>
          <button aria-label="Notifications"><svg class="ico"><use href="#s-clean"/></svg></button>
        </div>
        <div class="group">
          <button aria-label="Clean screen"><svg class="ico"><use href="#s-full"/></svg></button>
          <button aria-label="Customization"><svg class="ico"><use href="#s-menu"/></svg></button>
        </div>
      </div>
    </footer>
  </div>
</body>
</html>
```
FILE: styles.css
```css
/* Basic Reset */
* {
  margin: 0;
  padding: 0;
  box-sizing: border-box;
}

body {
  height: 100vh;
  padding: 3px 7px 7px 8px;
  background: linear-gradient(#d2d2d2, #dcdcdc 60%, #cfcfcf);
  font-family: Roboto, "Noto Sans", sans-serif;
  font-size: 10px;
  line-height: 12px;
  color: #e2e2e2;
  overflow: hidden;
}

button,
input,
select {
  font: inherit;
  color: inherit;
  background: none;
  border: 0;
  outline: none;
  appearance: none;
}

button {
  display: flex;
  align-items: center;
  justify-content: center;
  white-space: nowrap;
}

a {
  color: inherit;
  text-decoration: none;
}

/* Icons */
.sprite {
  position: absolute;
}

.ico {
  width: 14px;
  height: 14px;
  flex: none;
}

.pic {
  width: 30px;
  height: 28px;
  flex: none;
}

.s { fill: none; stroke: #cfcfcf; }
.sw { fill: none; stroke: #fff; }
.s2 { fill: none; stroke: #dcdcdc; stroke-width: 2; }
.sf { fill: #808284; stroke: #b4b4b4; }
.sp { fill: #dadada; stroke: #5b5b5b; }
.a { fill: none; stroke: #dcdcdc; stroke-width: 3; }
.b { fill: none; stroke: #6ea9d8; }
.b2 { fill: none; stroke: #6ea9d8; stroke-width: 2; }
.y { fill: none; stroke: #f0c070; }
.y2 { fill: none; stroke: #f0c070; stroke-width: 2; }
.r { fill: none; stroke: #c0675c; }
.g { fill: none; stroke: #67b98a; }
.dk { fill: none; stroke: #505254; }
.ld { fill: none; stroke: #d8d8d8; }
.ink { fill: #dcdee2; stroke: #3c4452; }
.dots { fill: none; stroke: #a5a5a5; stroke-dasharray: 1 1; }
.gear { fill: none; stroke: #dcdcdc; stroke-width: 3; }
.fw { fill: #f2f2f2; }
.fl { fill: #d6d6d6; }
.fg { fill: #909090; }
.fd { fill: #505050; }
.fdis { fill: #bcbcbc; }
.fb { fill: #7cc1ee; }
.fy { fill: #f5c873; }
.fr { fill: #c25a48; }
.dim { opacity: 0.5; }

.arrow {
  flex: none;
  border: 2px solid transparent;
  border-top: 3px solid #e6e6e6;
  border-bottom: 0;
}

.arrow.wide {
  border-width: 4px 3px 0;
}

.arrow.right {
  border: 3px solid transparent;
  border-left: 4px solid #fff;
  border-right: 0;
}

.arrow.up {
  border: 3px solid transparent;
  border-bottom: 3px solid #333;
  border-top: 0;
}

/* Desktop behind the window */
.behind {
  position: absolute;
}

.behind-left {
  left: 1px;
  top: 619px;
  width: 8px;
  height: 26px;
  background: #bdbdbd;
  border: 1px solid #8f8f8f;
}

.behind-right {
  right: 4px;
  top: 441px;
  width: 2px;
  height: 165px;
  background: #6a6a6a;
}

.behind-bottom {
  right: 21px;
  bottom: 0;
  width: 19px;
  height: 7px;
  background: #b9c3cf;
  border: 1px solid #7d93ad;
  border-top: 0;
}

/* Main window */
.window {
  position: relative;
  display: flex;
  flex-direction: column;
  height: 100%;
  border-radius: 8px 8px 4px 4px;
  background: #fff;
  box-shadow: 0 0 3px #777;
}

.titlebar {
  display: flex;
  align-items: flex-end;
  height: 24px;
  color: #222;
}

.app-button {
  position: absolute;
  left: 0;
  top: 5px;
  z-index: 2;
  width: 33px;
  height: 33px;
  border: 1px solid #222;
  background: linear-gradient(#c9c9c9, #8a8a8a 75%, #6f6f6f);
}

.quick {
  display: flex;
  align-items: center;
  gap: 5px;
  height: 19px;
  width: 209px;
  margin-left: 33px;
  padding-left: 6px;
  background: #a2a2a2;
}

.quick .bar {
  margin-left: 4px;
  box-shadow: 0 -2px 0 -1px #eee;
}

.title {
  flex: 1;
  display: flex;
  justify-content: center;
  gap: 15px;
  align-self: stretch;
  line-height: 23px;
  color: #2b2b2b;
}

.info {
  display: flex;
  align-items: center;
  height: 19px;
  width: 357px;
  background: #a2a2a2;
  color: #eee;
}

.info button {
  gap: 4px;
  margin-right: 5px;
}

.info .info-toggle {
  width: 11px;
  margin: 0;
}

.search {
  width: 144px;
  height: 17px;
  margin-right: 3px;
  padding-left: 3px;
  background: #777878;
  border: 1px solid #484848;
  font-size: 9px;
  font-style: italic;
}

.search::placeholder {
  color: #d2d2d2;
}

.info .signin {
  flex: 1;
}

.signin .arrow {
  margin-left: auto;
}

.info .help {
  gap: 4px;
  margin: 0 3px 0 6px;
}

.help span {
  width: 13px;
  height: 13px;
  border: 1px solid #3c4452;
  border-radius: 50%;
  background: #eceef0;
  color: #222;
  font-weight: bold;
  line-height: 11px;
}

.window-buttons {
  display: flex;
  justify-content: space-around;
  align-items: center;
  align-self: stretch;
  width: 131px;
  padding: 0 0 2px 22px;
}

.window-buttons path {
  fill: none;
  stroke: #222;
}

/* Ribbon tabs */
.menu {
  display: flex;
  height: 17px;
  padding-left: 37px;
  background: #535554;
  color: #c6c6c6;
}

.menu a {
  height: 17px;
  padding: 0 6px;
  border: 1px solid transparent;
  line-height: 17px;
  white-space: nowrap;
}

.menu .active {
  background: linear-gradient(#7c7c7c, #5e5e5e);
  border-color: #6e6e6e;
  border-bottom: 0;
  color: #fff;
}

.menu .boxed {
  border-color: #6a6a6a;
  color: #e8e8e8;
}

.ribbon-toggle {
  gap: 4px;
  margin-left: 17px;
}

/* Ribbon */
.ribbon {
  display: flex;
  height: 78px;
  padding-left: 1px;
  border-top: 1px solid #3a3a3a;
  background: linear-gradient(#4c4d4f 30%, #464646 30%, #464646 63%, #373737 63%);
}

.panel {
  flex: none;
  display: flex;
  flex-direction: column;
  border-right: 1px solid #454545;
  background: #5b5b5b;
}

.panel-body {
  flex: 1;
  display: flex;
  padding-top: 2px;
}

.panel-title {
  display: flex;
  align-items: center;
  justify-content: center;
  gap: 5px;
  height: 15px;
  background: #4c4d4f;
  color: #eee;
}

.launcher {
  width: 4px;
  height: 4px;
  border-right: 2px solid #ddd;
  border-bottom: 2px solid #ddd;
}

.big {
  flex-direction: column;
  justify-content: flex-start;
  padding-top: 1px;
}

.big .arrow {
  margin-top: 2px;
}

.big .pic {
  margin-bottom: 2px;
}

.stack {
  display: flex;
  flex-direction: column;
}

.tool {
  justify-content: flex-start;
  gap: 4px;
  height: 19px;
}

.tool.on {
  background: #5f8cb8;
}

.tool-row {
  display: flex;
  gap: 5px;
}

.p-draw { width: 180px; }
.p-draw .big { width: 38px; }
.p-draw .big:first-child { width: 34px; }
.p-draw .stack { padding-left: 1px; }
.p-draw .tool { gap: 5px; }

.p-modify { width: 200px; }
.p-modify .panel-body {
  display: grid;
  grid-template-columns: 58px 55px 60px 18px;
  align-content: start;
  padding-left: 4px;
}
.p-modify .tool .arrow {
  margin-left: auto;
  margin-right: 10px;
}

.p-annotation { width: 152px; }
.p-annotation .big { width: 50px; }
.p-annotation .big:first-child { width: 36px; }
.p-annotation .stack { padding-left: 4px; }

.p-layers { width: 218px; }
.p-layers .big,
.p-properties .big { width: 50px; }
.p-layers .stack { flex: 1; }
.p-layers .tool-row { padding-left: 2px; }

.p-block { width: 129px; }
.p-block .big { width: 34px; }
.p-block .stack { padding-left: 1px; }
.p-block .tool .arrow { margin-left: 2px; }

.p-properties { width: 212px; }
.p-properties .stack { flex: 1; }
.p-properties .launcher { position: absolute; right: 433px; }

.p-groups { width: 56px; }
.p-groups .big { width: 34px; }
.p-groups .tool { padding: 0 2px; }

.p-utilities { width: 78px; }
.p-utilities .big { width: 56px; }
.p-utilities .stack { padding-left: 2px; }

.p-clipboard { width: 64px; }
.p-clipboard .big { width: 42px; }
.p-clipboard .stack { padding-left: 2px; }

.p-view { width: 49px; }
.p-view .big { flex: 1; }

/* Drop-down boxes */
.combo {
  flex: 1;
  display: flex;
  align-items: center;
  gap: 2px;
  height: 18px;
  padding: 0 2px 0 3px;
  border: 1px solid #3e3e3e;
  background: linear-gradient(#686868, #585858);
}

.p-layers .combo {
  flex: none;
  margin-top: 1px;
}

.combo select {
  flex: 1;
  min-width: 0;
  padding-left: 2px;
  color: #eee;
}

.swatch {
  width: 11px;
  height: 11px;
  border: 1px solid #222;
  background: #fff;
}

.big-swatch {
  width: 13px;
  height: 13px;
  margin: 0 5px;
  border: 0;
}

.line-sample {
  width: 51px;
  height: 1px;
  background: #e8e8e8;
}

.line-sample + select {
  padding: 0;
}

.prop-row {
  display: flex;
  align-items: center;
  gap: 1px;
  height: 19px;
}

/* Open drawings */
.files {
  display: flex;
  align-items: flex-end;
  height: 25px;
  padding: 0 7px 4px 17px;
  border-top: 2px solid #5a5a5a;
  background: linear-gradient(#383838 19px, #5a5a5a 19px);
}

.file-tabs {
  flex: 1;
  display: flex;
}

.file {
  flex: 1 1 0;
  display: flex;
  align-items: center;
  justify-content: space-between;
  height: 18px;
  padding: 2px 10px 0 8px;
  background: linear-gradient(#5c5c5c, #4a4a4a);
  color: #aeb0b0;
  white-space: nowrap;
  clip-path: polygon(0 100%, 2px 75%, 4px 20%, 8px 0, calc(100% - 6px) 0, calc(100% - 2px) 20%, 100% 60%, 100% 100%);
}

.file.current {
  background: linear-gradient(#8c8c8c, #636363);
  color: #fff;
}

.x {
  width: 7px;
  height: 7px;
  background: linear-gradient(45deg, transparent 42%, #383838 42%, #383838 58%, transparent 58%), linear-gradient(-45deg, transparent 42%, #383838 42%, #383838 58%, transparent 58%);
}

.add-file {
  width: 19px;
  height: 14px;
  margin-left: 6px;
  border-radius: 4px 6px 6px 2px;
  background: #4c4c4c;
  font-size: 14px;
}

.more-files {
  flex-direction: column;
  gap: 1px;
  margin-left: 84px;
  padding-bottom: 6px;
}

/* Drawing area */
.canvas {
  position: relative;
  flex: 1;
  min-height: 0;
  background: #212830;
}

.drawing {
  display: block;
  width: 100%;
  height: 100%;
}

.drawing path {
  fill: none;
  stroke: #b9b9b5;
}

.drawing .slat {
  stroke: #a7aebd;
}

.viewport-label {
  position: absolute;
  left: 3px;
  top: 5px;
  color: #dcdcdc;
}

.doc-buttons {
  position: absolute;
  top: 7px;
  right: 8px;
  display: flex;
  gap: 7px;
}

.doc-buttons path {
  fill: none;
  stroke: #e2e2e2;
  stroke-width: 2;
}

.doc-buttons .thin {
  stroke-width: 1;
}

.viewcube {
  position: absolute;
  top: 30px;
  right: 12px;
  display: flex;
  flex-direction: column;
  align-items: center;
  gap: 14px;
}

.compass,
.face {
  font-family: "Liberation Sans", Arial, sans-serif;
  font-weight: bold;
  text-anchor: middle;
}

.compass {
  font-size: 16px;
  fill: #b4b7b9;
}

.face {
  font-size: 10px;
  fill: #454c55;
}

.wcs {
  width: 38px;
  height: 14px;
  justify-content: flex-start;
  padding-left: 3px;
  border: 1px solid #8c95a2;
  border-radius: 3px;
  background: #a1a4a7;
  color: #5c646e;
  font-size: 9px;
}

.navbar {
  position: absolute;
  top: 188px;
  right: 2px;
  height: 170px;
  border-radius: 3px;
  background: #5a5e65;
}

.navbar path,
.navbar circle {
  fill: none;
  stroke: #45494e;
}

.navbar .f {
  fill: #45494e;
}

.activate {
  position: absolute;
  right: 60px;
  bottom: 9px;
  color: #73777b;
}

.activate h2 {
  font-size: 16px;
  font-weight: normal;
  line-height: 20px;
}

.activate p {
  font-size: 12px;
  line-height: 16px;
}

/* Command line */
.command {
  position: absolute;
  left: 20%;
  right: 20%;
  bottom: 0;
  display: flex;
  flex-direction: column;
  align-items: flex-start;
  gap: 3px;
  font-family: "DejaVu Sans Mono", monospace;
  font-size: 9px;
}

.log {
  height: 13px;
  margin-left: 50px;
  padding: 0 2px;
  border-radius: 2px;
  background: #45494c;
  color: #bcbcbc;
  line-height: 13px;
  white-space: nowrap;
}

.log.last {
  margin-bottom: -1px;
  background: #5b5d5f;
  color: #e0e0e0;
}

.command-line {
  display: flex;
  align-items: center;
  align-self: stretch;
  height: 21px;
  padding-right: 4px;
  background: #bcbdc0;
}

.command-tools {
  display: flex;
  align-items: center;
  gap: 8px;
  width: 45px;
  height: 21px;
  margin-right: 4px;
  padding-left: 3px;
  background: linear-gradient(#686868, #444);
}

.command-tools path {
  fill: none;
  stroke: #ddd;
  stroke-width: 2;
}

.command-tools .thin {
  fill: #ddd;
  stroke-width: 1;
}

.grip {
  width: 5px;
  height: 15px;
  margin-right: -4px;
  background: repeating-linear-gradient(#999 0 1px, transparent 1px 3px);
}

.prompt path {
  fill: none;
  stroke: #4b4f55;
}

.prompt .f {
  fill: #4b4f55;
}

.command-line input {
  flex: 1;
  padding-left: 5px;
  font-style: italic;
  color: #333;
}

.command-line input::placeholder {
  color: #76787a;
}

/* Bottom bar */
.bottom {
  display: flex;
  align-items: flex-start;
  gap: 2px;
  height: 23px;
  padding-left: 9px;
  border-top: 1px solid #4a4a4a;
  border-radius: 0 0 4px 4px;
  background: #373737;
}

.layout {
  height: 14px;
  padding: 0 8px 0 9px;
  background: #505050;
  color: #b5b5b5;
  line-height: 14px;
  clip-path: polygon(0 0, 100% 0, calc(100% - 6px) 100%, 6px 100%);
}

.layout.current {
  background: #757575;
  color: #fff;
  font-weight: bold;
}

.layout.add {
  padding: 0 6px;
  font-size: 14px;
}

.status {
  display: flex;
  gap: 1px;
  height: 22px;
  margin-left: auto;
}

.group {
  display: flex;
  align-items: center;
  gap: 1px;
  padding: 0 1px;
  border: 1px solid #666;
  background: #4b4c4c;
}

.group button {
  height: 18px;
  padding: 0 2px;
}

.group .wide-label {
  padding: 0 3px;
}

.group .on {
  background: #5f91c4;
}

.group > .arrow {
  margin: 0 1px;
}

.group .ratio {
  gap: 3px;
}
```
